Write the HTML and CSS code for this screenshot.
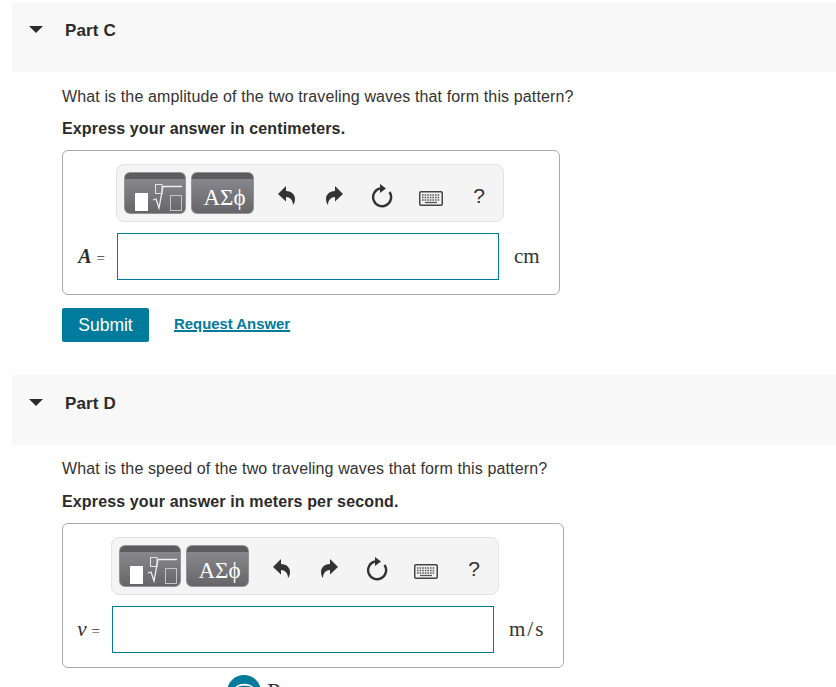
FILE: index.html
```html
<!DOCTYPE html>
<html lang="en">
<head>
<meta charset="utf-8">
<title>Part C and Part D</title>
<link rel="stylesheet" href="styles.css">
</head>
<body>
<svg class="defs" width="0" height="0" aria-hidden="true">
  <defs>
    <symbol id="i-template" viewBox="0 0 60 40">
      <rect x="10" y="20" width="13" height="18" fill="#fff"/>
      <rect x="30.5" y="11.5" width="6.5" height="9" fill="none" stroke="#e4e4e8" stroke-width="1"/>
      <path d="M28 27 L31 26 L34 35 L38 13.5 H57" fill="none" stroke="#f0f0f2" stroke-width="1.3"/>
      <rect x="45.5" y="22.5" width="11" height="15" fill="none" stroke="#c4c4c8" stroke-width="1"/>
    </symbol>
    <symbol id="i-undo" viewBox="0 0 17 19">
      <path d="M0 8 L8 0 V5 C14 5 17 9 17 13 C17 16 16 18 15 19 C15 14 12 11 8 11 V15.5 Z" fill="#333"/>
    </symbol>
    <symbol id="i-redo" viewBox="0 0 17 19">
      <path d="M17 8 L9 0 V5 C3 5 0 9 0 13 C0 16 1 18 2 19 C2 14 5 11 9 11 V15.5 Z" fill="#333"/>
    </symbol>
    <symbol id="i-reset" viewBox="0 0 22 24">
      <path d="M18.5 8 A9 9 0 1 1 9 4.4" fill="none" stroke="#333" stroke-width="2.4"/>
      <path d="M9 0 L15 4.5 L9 9 Z" fill="#333"/>
    </symbol>
    <symbol id="i-keys" viewBox="0 0 24 15">
      <rect x="0.75" y="0.75" width="22.5" height="13.5" rx="1.2" fill="#f4f4f4" stroke="#444" stroke-width="1.5"/>
      <path d="M3 4 H21 M3 6.5 H21 M3 9 H21" stroke="#555" stroke-width="1.3" stroke-dasharray="1.6 1"/>
      <path d="M6 11.5 H18" stroke="#555" stroke-width="1.3"/>
    </symbol>
  </defs>
</svg>

<section class="part">
  <h2 class="part-head"><span class="caret"></span>Part C</h2>
  <div class="part-body">
    <p class="question">What is the amplitude of the two traveling waves that form this pattern?</p>
    <p class="instruction">Express your answer in centimeters.</p>
    <div class="answer answer-c">
      <div class="toolbar">
        <button class="tool-btn tool-first" type="button"><svg class="tpl"><use href="#i-template"/></svg></button>
        <button class="tool-btn tool-greek" type="button">ΑΣϕ</button>
        <span class="tool-icon"><svg class="ico-arrow"><use href="#i-undo"/></svg></span>
        <span class="tool-icon"><svg class="ico-arrow"><use href="#i-redo"/></svg></span>
        <span class="tool-icon"><svg class="ico-reset"><use href="#i-reset"/></svg></span>
        <span class="tool-icon"><svg class="ico-keys"><use href="#i-keys"/></svg></span>
        <span class="tool-icon tool-help">?</span>
      </div>
      <div class="math-label"><i class="var">A</i> <span class="eq">=</span></div>
      <div class="math-input"></div>
      <div class="unit">cm</div>
    </div>
    <div class="actions">
      <button class="submit" type="button">Submit</button>
      <a class="request" href="#">Request Answer</a>
    </div>
  </div>
</section>

<section class="part part-d">
  <h2 class="part-head"><span class="caret"></span>Part D</h2>
  <div class="part-body">
    <p class="question">What is the speed of the two traveling waves that form this pattern?</p>
    <p class="instruction">Express your answer in meters per second.</p>
    <div class="answer answer-d">
      <div class="toolbar">
        <button class="tool-btn tool-first" type="button"><svg class="tpl"><use href="#i-template"/></svg></button>
        <button class="tool-btn tool-greek" type="button">ΑΣϕ</button>
        <span class="tool-icon"><svg class="ico-arrow"><use href="#i-undo"/></svg></span>
        <span class="tool-icon"><svg class="ico-arrow"><use href="#i-redo"/></svg></span>
        <span class="tool-icon"><svg class="ico-reset"><use href="#i-reset"/></svg></span>
        <span class="tool-icon"><svg class="ico-keys"><use href="#i-keys"/></svg></span>
        <span class="tool-icon tool-help">?</span>
      </div>
      <div class="math-label"><i class="var var-v">v</i> <span class="eq">=</span></div>
      <div class="math-input"></div>
      <div class="unit unit-wide">m/s</div>
    </div>
    <footer class="brand">
      <svg class="brand-mark" viewBox="0 0 34 34">
        <circle cx="17" cy="17" r="17" fill="#007b9c"/>
        <path d="M8 13 C10 8 23 7 27 13 C22 10 13 10 8 13 Z" fill="#fff"/>
      </svg>
      <span class="brand-name">Pearson</span>
    </footer>
  </div>
</section>
</body>
</html>
```

FILE: styles.css
```css
html, body {
  margin: 0;
  padding: 0;
  height: 687px;
  overflow: hidden;
  background: #fff;
}
body {
  padding-top: 2px;
  box-sizing: border-box;
  font-family: "Liberation Sans", Arial, sans-serif;
  font-size: 16px;
  color: #333;
}
.defs { position: absolute; }

.part-head {
  display: flex;
  align-items: flex-start;
  height: 70px;
  box-sizing: border-box;
  margin: 0 0 0 12px;
  padding: 19px 0 0 17px;
  background: #f8f8f8;
  font-size: 17px;
  line-height: 20px;
  font-weight: 700;
  letter-spacing: 0.15px;
  color: #2b2b2b;
}
.caret {
  width: 0;
  height: 0;
  margin: 5px 22px 0 0;
  border-left: 7.5px solid transparent;
  border-right: 7.5px solid transparent;
  border-top: 7.5px solid #2b2b2b;
}
.part-body { padding: 15px 0 33px 62px; }

.question, .instruction {
  margin: 0;
  line-height: 20px;
  color: #333;
  letter-spacing: 0.125px;
}
.instruction {
  margin-top: 12px;
  font-weight: 700;
  color: #2b2b2b;
  letter-spacing: 0.14px;
}
.part-d .question { margin-top: -1px; }
.part-d .instruction { margin-top: 13px; }

.answer {
  display: grid;
  box-sizing: border-box;
  margin-top: 11px;
  height: 145px;
  padding-top: 13px;
  row-gap: 11px;
  grid-template-rows: 58px 47px;
  border: 1px solid #aaa;
  border-radius: 6px;
  align-items: center;
}
.answer-c { width: 498px; grid-template-columns: 54px 382px auto; }
.answer-d { width: 502px; grid-template-columns: 49px 382px auto; }

.toolbar {
  grid-column: 2 / 4;
  grid-row: 1;
  display: flex;
  align-items: center;
  box-sizing: border-box;
  width: 388px;
  height: 58px;
  margin-left: -1px;
  padding-left: 7px;
  background: #f4f4f4;
  border: 1px solid #e2e2e2;
  border-radius: 8px;
}
.tool-btn {
  display: block;
  box-sizing: border-box;
  height: 42px;
  padding: 9px 0 0;
  border: 1px solid #949494;
  border-radius: 6px;
  background:
    linear-gradient(#5c5c5e, #5c5c5e) top / 100% 6px no-repeat,
    linear-gradient(#8c8c92, #66666a);
  color: #fff;
  font-family: "Liberation Serif", "DejaVu Serif", serif;
  font-size: 23px;
  line-height: 28px;
}
.tool-first { width: 62px; padding: 0; margin-right: 5px; }
.tool-greek { width: 63px; margin-right: 8px; padding-left: 4px; }
.tpl { display: block; width: 60px; height: 40px; }

.tool-icon {
  display: flex;
  align-items: center;
  justify-content: center;
  width: 48px;
  height: 40px;
  padding-top: 5px;
}
.ico-arrow { width: 17px; height: 19px; }
.ico-reset { width: 22px; height: 24px; }
.ico-keys { width: 24px; height: 15px; margin: 6px 0 0 2px; }
.tool-help {
  padding-left: 2px;
  box-sizing: content-box;
  width: 46px;
  font-size: 21px;
  color: #333;
}

.math-label {
  grid-column: 1;
  grid-row: 2;
  justify-self: end;
  padding-right: 12px;
  font-family: "Liberation Serif", serif;
  white-space: nowrap;
}
.var {
  margin-right: 1px;
  font-size: 20px;
  font-weight: 700;
  color: #2b2b2b;
}
.var-v { font-size: 21px; font-weight: 400; }
.eq { font-size: 15px; }

.math-input {
  grid-column: 2;
  grid-row: 2;
  box-sizing: border-box;
  height: 47px;
  border: 1px solid #007b9c;
}
.unit {
  grid-column: 3;
  grid-row: 2;
  padding-left: 15px;
  font-family: "Liberation Serif", serif;
  font-size: 21px;
  color: #333;
}
.unit-wide { letter-spacing: 2px; }

.actions {
  display: flex;
  align-items: center;
  margin-top: 13px;
}
.submit {
  width: 87px;
  height: 34px;
  padding: 0;
  border: 0;
  border-radius: 2px;
  background: #007b9c;
  color: #fff;
  font-family: "Liberation Sans", Arial, sans-serif;
  font-size: 17.5px;
}
.request {
  margin: 0 0 3px 25px;
  color: #007b9c;
  font-size: 14.9px;
  font-weight: 700;
  text-decoration: underline;
  text-decoration-thickness: 2px;
}

.brand {
  display: flex;
  align-items: flex-start;
  margin: 7px 0 0 165px;
}
.brand-mark { width: 34px; height: 34px; flex: none; }
.brand-name {
  margin: 2px 0 0 6px;
  font-family: "Liberation Serif", serif;
  font-size: 24px;
  line-height: 28px;
  color: #333;
}
```
